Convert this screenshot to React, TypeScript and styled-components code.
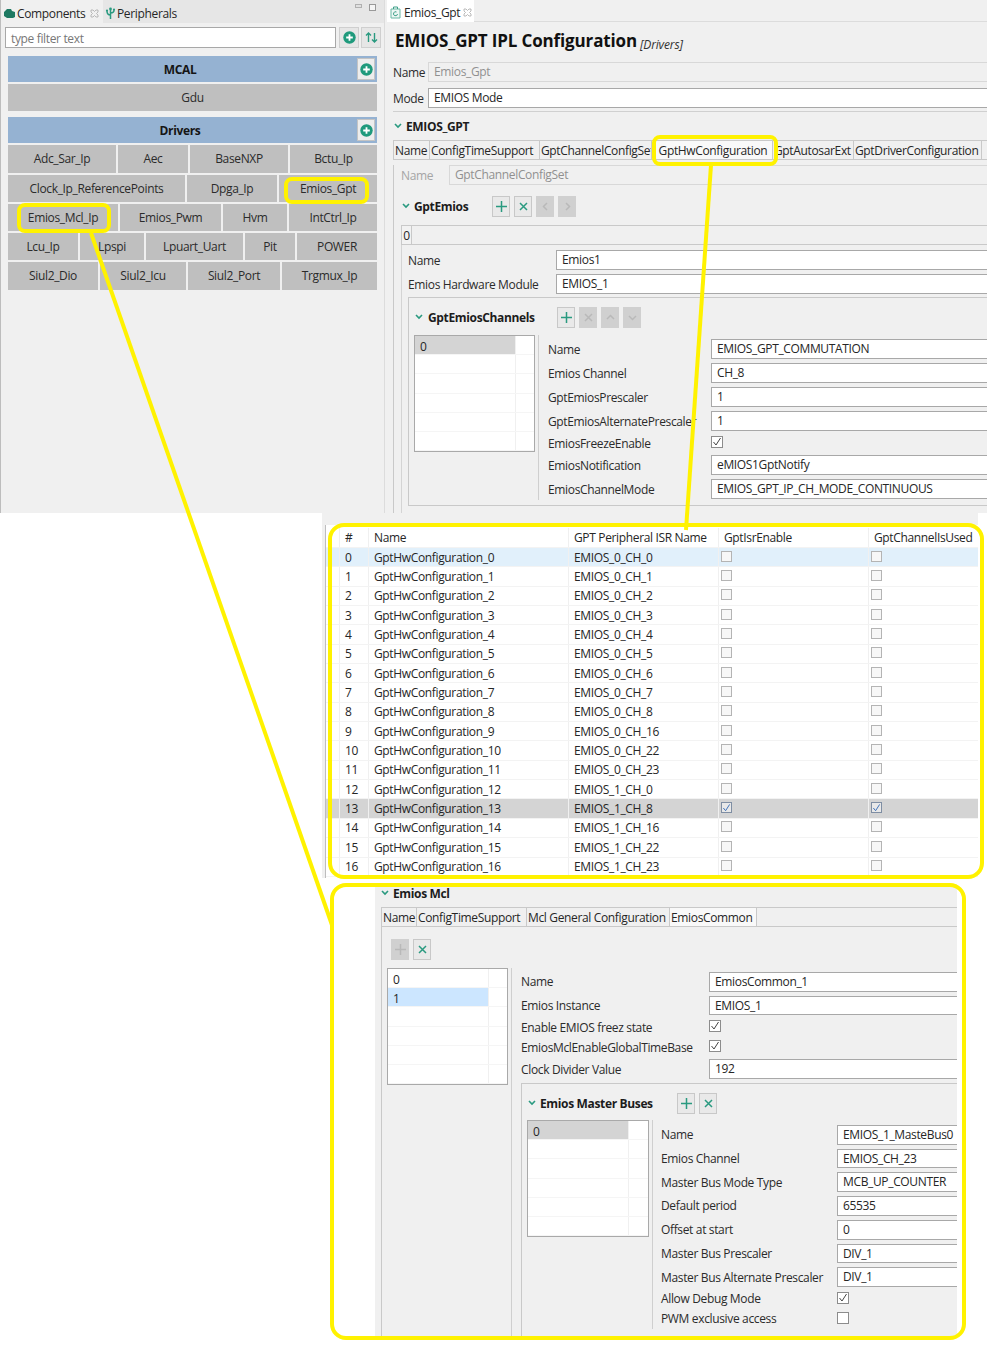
import React from "react";
import styled, { createGlobalStyle } from "styled-components";

const GlobalStyle = createGlobalStyle`
  html, body {
    margin: 0;
    padding: 0;
    background: #fff;
  }
  body {
    font-family: "Open Sans", "Liberation Sans", sans-serif;
    font-size: 12px;
    letter-spacing: -0.35px;
    color: #262626;
  }
  * {
    box-sizing: border-box;
  }
`;

const TEAL = "#2a9a80";

/* ---------- icons ---------- */

const Chevron = () => (
  <svg width="8" height="6" viewBox="0 0 8 6">
    <path d="M1 1l3 3 3-3" fill="none" stroke={TEAL} strokeWidth="1.6" />
  </svg>
);

const PlusCircle = () => (
  <svg width="13" height="13" viewBox="0 0 13 13">
    <circle cx="6.5" cy="6.5" r="6.2" fill="#1f9a7c" />
    <path d="M6.5 3.2v6.6M3.2 6.5h6.6" stroke="#fff" strokeWidth="1.8" />
  </svg>
);

const SortArrows = () => (
  <svg width="13" height="13" viewBox="0 0 13 13">
    <path d="M3.5 11V2M1 4.5l2.5-2.5L6 4.5" fill="none" stroke={TEAL} strokeWidth="1.4" />
    <path d="M9.5 2v9M7 8.5L9.5 11 12 8.5" fill="none" stroke={TEAL} strokeWidth="1.4" />
  </svg>
);

const toolPaths: Record<string, string> = {
  plus: "M6.5 1v11M1 6.5h11",
  cross: "M3 3l7 7M10 3l-7 7",
  left: "M8 3L4.5 6.5 8 10",
  right: "M5 3l3.5 3.5L5 10",
  up: "M3 8l3.5-3.5L10 8",
  down: "M3 5l3.5 3.5L10 5",
};

const CloseMark = () => (
  <svg width="9" height="9" viewBox="0 0 9 9">
    <path d="M1 1l2 0 1.500 1.500L6 1l2 0 0 2L6.500 4.500 8 6v2L6 8 4.500 6.500 3 8 1 8 1 6l1.500-1.500L1 3z" fill="none" stroke="#a9a9a9" strokeWidth="0.8" />
  </svg>
);

const ComponentsIcon = () => (
  <svg width="13" height="11" viewBox="0 0 13 11">
    <path d="M1 4l3-3h4l1 2 3 1v5l-2 1H4L1 8z" fill="#1f7a63" />
  </svg>
);

const PeripheralsIcon = () => (
  <svg width="11" height="13" viewBox="0 0 11 13">
    <path d="M5.500 12V3M5.500 8C2.500 8 2 6.500 2 4M5.500 6C8.500 6 9 5 9 3" fill="none" stroke="#2a9a80" strokeWidth="1.5" />
    <circle cx="5.500" cy="2" r="1.400" fill="#2a9a80" />
    <circle cx="2" cy="3.500" r="1.100" fill="#2a9a80" />
    <circle cx="9" cy="2.500" r="1.100" fill="#2a9a80" />
  </svg>
);

const FileIcon = () => (
  <svg width="11" height="13" viewBox="0 0 11 13">
    <path d="M1 3h9v9H1z" fill="#eef7f4" stroke="#6bb8a5" />
    <path d="M3.500 3V1h4v2M7.500 8a2 2 0 1 1-1-2" fill="none" stroke="#3d9f88" />
  </svg>
);

/* ---------- shared parts ---------- */

const Page = styled.div`
  position: relative;
  width: 987px;
  height: 1345px;
  overflow: hidden;
  background: #fff;
`;

const Annotations = styled.svg`
  position: absolute;
  left: 0;
  top: 0;
  pointer-events: none;
`;

const Section = styled.div<{ $left?: number; $top?: number }>`
  display: flex;
  align-items: center;
  height: 20px;
  margin-left: ${(p) => p.$left ?? 0}px;
  margin-top: ${(p) => p.$top ?? 0}px;
`;

const SectionLabel = styled.div<{ $w?: number; $gap?: number }>`
  display: flex;
  align-items: center;
  gap: ${(p) => p.$gap ?? 4}px;
  width: ${(p) => (p.$w ? `${p.$w}px` : "auto")};
  font-weight: 700;
  color: #1c1c1c;
  white-space: nowrap;
`;

const Tools = styled.div<{ $left?: number }>`
  display: flex;
  gap: 4px;
  margin-left: ${(p) => p.$left ?? 0}px;
`;

const ToolBtn = styled.div<{ $off?: boolean }>`
  display: flex;
  align-items: center;
  justify-content: center;
  width: 18px;
  height: 21px;
  background: ${(p) => (p.$off ? "#d0d0d0" : "#e9e9e9")};
  border: 1px solid ${(p) => (p.$off ? "#d0d0d0" : "#c8c8c8")};
`;

const Tool = ({ kind, off }: { kind: string; off?: boolean }) => (
  <ToolBtn $off={off}>
    <svg width="13" height="13" viewBox="0 0 13 13">
      <path d={toolPaths[kind]} fill="none" stroke={off ? "#b9b9b9" : TEAL} strokeWidth="1.5" />
    </svg>
  </ToolBtn>
);

const TabRow = styled.div<{ $left?: number; $top?: number }>`
  display: flex;
  height: 20px;
  margin-left: ${(p) => p.$left ?? 0}px;
  margin-top: ${(p) => p.$top ?? 0}px;
  border-top: 1px solid #c9c9c9;
  border-bottom: 1px solid #c9c9c9;
  border-left: 1px solid #c9c9c9;
`;

const Tab = styled.div<{ $w: number; $on?: boolean }>`
  flex: 0 0 ${(p) => p.$w}px;
  overflow: hidden;
  padding-left: 1px;
  line-height: 19px;
  white-space: nowrap;
  background: ${(p) => (p.$on ? "#f9f9f9" : "#f0f0f0")};
  border-right: 1px solid #c9c9c9;
`;

const Row = styled.div<{ $top?: number }>`
  display: flex;
  align-items: center;
  height: 20px;
  margin-top: ${(p) => p.$top ?? 0}px;
`;

const Label = styled.div<{ $w: number; $muted?: boolean }>`
  flex: 0 0 ${(p) => p.$w}px;
  white-space: nowrap;
  color: ${(p) => (p.$muted ? "#a5a5a5" : "#2b2b2b")};
`;

const Input = styled.div<{ $off?: boolean }>`
  flex: 1;
  height: 100%;
  margin-right: -6px;
  padding-left: 5px;
  line-height: 18px;
  white-space: nowrap;
  background: ${(p) => (p.$off ? "#f0f0f0" : "#fff")};
  color: ${(p) => (p.$off ? "#909090" : "#262626")};
  border: 1px solid ${(p) => (p.$off ? "#d8d8d8" : "#a8a8a8")};
`;

const Form = styled.div<{ $pitch?: number; $top?: number }>`
  --pitch: ${(p) => p.$pitch ?? 24}px;
  flex: 1;
  min-width: 0;
  padding-top: ${(p) => p.$top ?? 2}px;
`;

const Field = styled.div`
  display: flex;
  align-items: center;
  height: var(--pitch);
  padding: 2px 0;
`;

const CheckField = styled.div`
  display: flex;
  align-items: center;
  height: 20px;
`;

const CheckBox = styled.div<{ $tone?: "form" | "cell" | "blue" }>`
  display: flex;
  align-items: center;
  justify-content: center;
  width: ${(p) => (p.$tone === "form" ? 12 : 11)}px;
  height: ${(p) => (p.$tone === "form" ? 12 : 11)}px;
  margin-bottom: 2px;
  background: ${(p) => (p.$tone === "form" ? "#fff" : p.$tone === "blue" ? "#e8e8e8" : "#f7f7f7")};
  border: 1px solid ${(p) => (p.$tone === "form" ? "#8c8c8c" : p.$tone === "blue" ? "#7f8ea3" : "#b4b4b4")};
`;

const Check = ({ tone, on }: { tone?: "form" | "cell" | "blue"; on?: boolean }) => (
  <CheckBox $tone={tone}>
    {on && (
      <svg width="10" height="10" viewBox="0 0 10 10">
        <path d="M1.500 5l2.500 3 4.500-7" fill="none" stroke={tone === "blue" ? "#2f66b5" : "#444"} strokeWidth="1" />
      </svg>
    )}
  </CheckBox>
);

const ListBox = styled.div<{ $w: number }>`
  flex: 0 0 ${(p) => p.$w}px;
  height: 117px;
  background: #fff;
  border: 1px solid #a9a9a9;
  align-self: flex-start;
`;

const ListRow = styled.div`
  display: flex;
  height: 19.2px;
  border-bottom: 1px solid #f5f5f5;
`;

const ListCell = styled.div<{ $tone?: "grey" | "blue" }>`
  flex: 0 0 101px;
  padding-left: 5px;
  line-height: 21px;
  background: ${(p) => (p.$tone === "grey" ? "#d4d4d4" : p.$tone === "blue" ? "#cce6ff" : "transparent")};
  border-right: 1px solid #f0f0f0;
`;

const ItemList = ({ w, items, tones }: { w: number; items: string[]; tones: Record<number, "grey" | "blue"> }) => (
  <ListBox $w={w}>
    {[0, 1, 2, 3, 4, 5].map((i) => (
      <ListRow key={i}>
        <ListCell $tone={tones[i]}>{items[i]}</ListCell>
      </ListRow>
    ))}
  </ListBox>
);

const Split = styled.div<{ $top: number }>`
  display: flex;
  margin-top: ${(p) => p.$top}px;
`;

const Divider = styled.div<{ $h?: number; $after: number }>`
  flex: 0 0 1px;
  height: ${(p) => (p.$h ? `${p.$h}px` : "auto")};
  margin: 0 ${(p) => p.$after}px 0 3px;
  background: #cfcfcf;
`;

/* ---------- left pane ---------- */

const Top = styled.div`
  display: flex;
  height: 513px;
  background: #f0f0f0;
`;

const LeftPane = styled.div`
  flex: 0 0 385px;
  border-left: 1px solid #bdbdbd;
  border-right: 1px solid #dcdcdc;
`;

const ViewStrip = styled.div`
  display: flex;
  align-items: center;
  height: 23px;
  background: #e6e6e6;
`;

const ViewTab = styled.div<{ $on?: boolean; $w: number }>`
  display: flex;
  align-items: center;
  gap: 1px;
  flex: 0 0 ${(p) => p.$w}px;
  height: 100%;
  padding: 3px 0 0 2px;
  background: ${(p) => (p.$on ? "#f0f0f0" : "transparent")};
`;

const TabText = styled.span`
  margin-right: 4px;
`;

const WindowBtns = styled.div`
  display: flex;
  gap: 7px;
  margin-left: auto;
  margin-right: 8px;
  margin-bottom: 8px;
`;

const MinBtn = styled.div`
  width: 7px;
  height: 4px;
  border: 1px solid #b0b0b0;
  background: #e0e0e0;
`;

const MaxBtn = styled.div`
  width: 7px;
  height: 7px;
  border: 1px solid #999;
  background: #f5f5f5;
`;

const FilterRow = styled.div`
  display: flex;
  align-items: center;
  height: 21px;
  margin: 4px 0 0 4px;
`;

const FilterInput = styled.div`
  flex: 0 0 331px;
  height: 100%;
  padding-left: 5px;
  line-height: 21px;
  color: #777;
  background: #fff;
  border: 1px solid #a8a8a8;
`;

const FilterBtn = styled.div<{ $left: number }>`
  display: flex;
  align-items: center;
  justify-content: center;
  flex: 0 0 20px;
  height: 100%;
  margin-left: ${(p) => p.$left}px;
  background: #e6e6e6;
  border: 1px solid #cfcfcf;
`;

const Tiles = styled.div`
  display: flex;
  flex-direction: column;
  gap: 2px;
  width: 369px;
  margin: 8px 0 0 7px;
`;

const BlueBar = styled.div<{ $top?: number }>`
  display: flex;
  align-items: center;
  height: 26px;
  margin-top: ${(p) => p.$top ?? 0}px;
  padding-right: 2px;
  background: #95b2d2;
`;

const BarTitle = styled.div`
  flex: 1;
  padding-right: 5px;
  padding-top: 1px;
  text-align: center;
  font-weight: 700;
  color: #151515;
`;

const BarBtn = styled.div`
  display: flex;
  align-items: center;
  justify-content: center;
  width: 18px;
  height: 22px;
  background: #ededed;
  border: 1px solid #c4c4c4;
`;

const TileRow = styled.div`
  display: flex;
  gap: 2px;
`;

const Tile = styled.div<{ $grow: number }>`
  flex: ${(p) => p.$grow} 0 0;
  height: 27.25px;
  line-height: 28px;
  text-align: center;
  white-space: nowrap;
  color: #2b2b2b;
  background: #bfbfbf;
`;

const tileRows: [string, number][][] = [
  [["Adc_Sar_Ip", 108], ["Aec", 70], ["BaseNXP", 98], ["Bctu_Ip", 87]],
  [["Clock_Ip_ReferencePoints", 177], ["Dpga_Ip", 90], ["Emios_Gpt", 98]],
  [["Emios_Mcl_Ip", 110], ["Emios_Pwm", 101], ["Hvm", 64], ["IntCtrl_Ip", 88]],
  [["Lcu_Ip", 70], ["Lpspi", 64], ["Lpuart_Uart", 97], ["Pit", 50], ["POWER", 80]],
  [["Siul2_Dio", 90], ["Siul2_Icu", 86], ["Siul2_Port", 92], ["Trgmux_Ip", 95]],
];

/* ---------- right pane ---------- */

const RightPane = styled.div`
  flex: 1;
  min-width: 0;
  margin-left: 2px;
  overflow: hidden;
  padding-left: 6px;
`;

const EditorStrip = styled.div`
  height: 22px;
  margin-left: -6px;
  border-bottom: 1px solid #dcdcdc;
`;

const EditorTab = styled.div`
  display: flex;
  align-items: center;
  gap: 3px;
  width: 87px;
  height: 22px;
  padding: 2px 0 0 3px;
  background: #fff;
`;

const Title = styled.div`
  margin: 8px 0 0 2px;
  height: 22px;
  line-height: 22px;
  font-size: 17px;
  font-weight: 700;
  letter-spacing: -0.15px;
  color: #111;
  white-space: nowrap;
`;

const TitleNote = styled.span`
  margin-left: 3px;
  font-size: 12px;
  font-weight: 400;
  font-style: italic;
  vertical-align: -2px;
  color: #333;
`;

const Rule = styled.div`
  height: 1px;
  margin-top: 3px;
  background: #d0d0d0;
`;

const TabBody = styled.div`
  height: 353px;
  padding-left: 7px;
  border-left: 1px solid #c9c9c9;
`;

const InnerTabs = styled.div`
  display: flex;
  height: 20px;
  margin: 9px 0 0 0;
  border-bottom: 1px solid #c9c9c9;
`;

const InnerTab = styled.div`
  width: 11px;
  line-height: 19px;
  text-align: center;
  border: 1px solid #c9c9c9;
  border-bottom: none;
  background: #f2f2f2;
`;

const InnerStrip = styled.div`
  flex: 1;
  border-top: 1px solid #c9c9c9;
`;

const InnerBody = styled.div`
  height: 270px;
  padding: 5px 0 0 6px;
  border-left: 1px solid #d4d4d4;
`;

const GroupBox = styled.div<{ $top: number; $h: number; $left?: number }>`
  height: ${(p) => p.$h}px;
  margin-top: ${(p) => p.$top}px;
  margin-left: ${(p) => p.$left ?? 0}px;
  padding: 8.5px 0 0 5px;
  border: 1px solid #c9c9c9;
  border-right: none;
`;

const GroupHead = styled.div`
  display: flex;
  align-items: center;
  height: 21px;
  padding-left: 1px;
`;

/* ---------- config table ---------- */

const TablePanel = styled.div`
  width: 656px;
  height: 365px;
  margin-left: 322px;
  padding: 12px 0 0 3px;
  background: #f0f0f0;
`;

const Table = styled.div`
  height: 353px;
  overflow: hidden;
  background: #fff;
  border-left: 1px solid #bdbdbd;
`;

const TRow = styled.div<{ $tone?: "head" | "hover" | "sel" }>`
  display: grid;
  grid-template-columns: 13px 29px 200px 150px 150px 1fr;
  height: ${(p) => (p.$tone === "head" ? 23 : 19.35)}px;
  padding-top: ${(p) => (p.$tone === "head" ? 3 : 0)}px;
  background: ${(p) => (p.$tone === "hover" ? "#e1f0fb" : p.$tone === "sel" ? "#d4d4d4" : "#fff")};
  border-bottom: 1px solid #f3f3f3;
`;

const TCell = styled.div<{ $check?: boolean }>`
  display: flex;
  align-items: center;
  padding-left: ${(p) => (p.$check ? 2 : 5)}px;
  border-left: 1px solid #f0f0f0;
  white-space: nowrap;
  overflow: hidden;
`;

const Gutter = styled.div``;

const isrNames = [
  "EMIOS_0_CH_0", "EMIOS_0_CH_1", "EMIOS_0_CH_2", "EMIOS_0_CH_3", "EMIOS_0_CH_4", "EMIOS_0_CH_5",
  "EMIOS_0_CH_6", "EMIOS_0_CH_7", "EMIOS_0_CH_8", "EMIOS_0_CH_16", "EMIOS_0_CH_22", "EMIOS_0_CH_23",
  "EMIOS_1_CH_0", "EMIOS_1_CH_8", "EMIOS_1_CH_16", "EMIOS_1_CH_22", "EMIOS_1_CH_23",
];

/* ---------- Emios Mcl panel ---------- */

const McuPanel = styled.div`
  width: 582px;
  height: 452px;
  margin: 6px 0 0 375px;
  overflow: hidden;
  background: #f0f0f0;
`;

const McuBody = styled.div`
  height: 410px;
  margin-left: 6px;
  padding: 12px 0 0 5px;
  border-left: 1px solid #c9c9c9;
`;

const McuColumns = styled.div`
  display: flex;
  height: 368px;
  margin-top: 8px;
`;

const McuRight = styled.div`
  flex: 1;
  min-width: 0;
`;

export default function App() {
  return (
    <Page>
      <GlobalStyle />
      <Top>
        <LeftPane>
          <ViewStrip>
            <ViewTab $on $w={102}>
              <ComponentsIcon />
              <TabText>Components</TabText>
              <CloseMark />
            </ViewTab>
            <ViewTab $w={90}>
              <PeripheralsIcon />
              <TabText>Peripherals</TabText>
            </ViewTab>
            <WindowBtns>
              <MinBtn />
              <MaxBtn />
            </WindowBtns>
          </ViewStrip>
          <FilterRow>
            <FilterInput>type filter text</FilterInput>
            <FilterBtn $left={3}>
              <PlusCircle />
            </FilterBtn>
            <FilterBtn $left={2}>
              <SortArrows />
            </FilterBtn>
          </FilterRow>
          <Tiles>
            <BlueBar>
              <BarTitle>MCAL</BarTitle>
              <BarBtn>
                <PlusCircle />
              </BarBtn>
            </BlueBar>
            <TileRow>
              <Tile $grow={1}>Gdu</Tile>
            </TileRow>
            <BlueBar $top={4}>
              <BarTitle>Drivers</BarTitle>
              <BarBtn>
                <PlusCircle />
              </BarBtn>
            </BlueBar>
            {tileRows.map((row, i) => (
              <TileRow key={i}>
                {row.map(([name, grow]) => (
                  <Tile key={name} $grow={grow}>
                    {name}
                  </Tile>
                ))}
              </TileRow>
            ))}
          </Tiles>
        </LeftPane>

        <RightPane>
          <EditorStrip>
            <EditorTab>
              <FileIcon />
              <span>Emios_Gpt</span>
              <CloseMark />
            </EditorTab>
          </EditorStrip>
          <Title>
            EMIOS_GPT IPL Configuration<TitleNote>[Drivers]</TitleNote>
          </Title>
          <Row $top={10}>
            <Label $w={35}>Name</Label>
            <Input $off>Emios_Gpt</Input>
          </Row>
          <Row $top={6}>
            <Label $w={35}>Mode</Label>
            <Input>EMIOS Mode</Input>
          </Row>
          <Rule />
          <Section $left={1} $top={4}>
            <SectionLabel>
              <Chevron />
              EMIOS_GPT
            </SectionLabel>
          </Section>
          <TabRow $top={4}>
            <Tab $w={36}>Name</Tab>
            <Tab $w={110}>ConfigTimeSupport</Tab>
            <Tab $w={112}>GptChannelConfigSet</Tab>
            <Tab $w={121} $on>
              &nbsp;&nbsp;GptHwConfiguration
            </Tab>
            <Tab $w={81}>GptAutosarExt</Tab>
            <Tab $w={128}>GptDriverConfiguration</Tab>
          </TabRow>
          <TabBody>
            <Row $top={5}>
              <Label $w={48} $muted>
                Name
              </Label>
              <Input $off>GptChannelConfigSet</Input>
            </Row>
            <Section $left={1} $top={11}>
              <SectionLabel $w={90}>
                <Chevron />
                GptEmios
              </SectionLabel>
              <Tools>
                <Tool kind="plus" />
                <Tool kind="cross" />
                <Tool kind="left" off />
                <Tool kind="right" off />
              </Tools>
            </Section>
            <InnerTabs>
              <InnerTab>0</InnerTab>
              <InnerStrip />
            </InnerTabs>
            <InnerBody>
              <Row>
                <Label $w={148}>Name</Label>
                <Input>Emios1</Input>
              </Row>
              <Row $top={4}>
                <Label $w={148}>Emios Hardware Module</Label>
                <Input>EMIOS_1</Input>
              </Row>
              <GroupBox $top={3} $h={209}>
                <GroupHead>
                  <SectionLabel $w={142} $gap={5}>
                    <Chevron />
                    GptEmiosChannels
                  </SectionLabel>
                  <Tools>
                    <Tool kind="plus" />
                    <Tool kind="cross" off />
                    <Tool kind="up" off />
                    <Tool kind="down" off />
                  </Tools>
                </GroupHead>
                <Split $top={7.5}>
                  <ItemList w={121} items={["0"]} tones={{ 0: "grey" }} />
                  <Divider $after={9} $h={165} />
                  <Form>
                    <Field>
                      <Label $w={163}>Name</Label>
                      <Input>EMIOS_GPT_COMMUTATION</Input>
                    </Field>
                    <Field>
                      <Label $w={163}>Emios Channel</Label>
                      <Input>CH_8</Input>
                    </Field>
                    <Field>
                      <Label $w={163}>GptEmiosPrescaler</Label>
                      <Input>1</Input>
                    </Field>
                    <Field>
                      <Label $w={163}>GptEmiosAlternatePrescaler</Label>
                      <Input>1</Input>
                    </Field>
                    <CheckField>
                      <Label $w={163}>EmiosFreezeEnable</Label>
                      <Check tone="form" on />
                    </CheckField>
                    <Field>
                      <Label $w={163}>EmiosNotification</Label>
                      <Input>eMIOS1GptNotify</Input>
                    </Field>
                    <Field>
                      <Label $w={163}>EmiosChannelMode</Label>
                      <Input>EMIOS_GPT_IP_CH_MODE_CONTINUOUS</Input>
                    </Field>
                  </Form>
                </Split>
              </GroupBox>
            </InnerBody>
          </TabBody>
        </RightPane>
      </Top>

      <TablePanel>
        <Table>
          <TRow $tone="head">
            <Gutter />
            <TCell>#</TCell>
            <TCell>Name</TCell>
            <TCell>GPT Peripheral ISR Name</TCell>
            <TCell>GptIsrEnable</TCell>
            <TCell>GptChannelIsUsed</TCell>
          </TRow>
          {isrNames.map((isr, i) => (
            <TRow key={isr} $tone={i === 0 ? "hover" : i === 13 ? "sel" : undefined}>
              <Gutter />
              <TCell>{i}</TCell>
              <TCell>GptHwConfiguration_{i}</TCell>
              <TCell>{isr}</TCell>
              <TCell $check>
                <Check tone={i === 13 ? "blue" : "cell"} on={i === 13} />
              </TCell>
              <TCell $check>
                <Check tone={i === 13 ? "blue" : "cell"} on={i === 13} />
              </TCell>
            </TRow>
          ))}
        </Table>
      </TablePanel>

      <McuPanel>
        <Section $left={6} $top={-1}>
          <SectionLabel>
            <Chevron />
            Emios Mcl
          </SectionLabel>
        </Section>
        <TabRow $left={6} $top={4}>
          <Tab $w={35}>Name</Tab>
          <Tab $w={110}>ConfigTimeSupport</Tab>
          <Tab $w={143}>Mcl General Configuration</Tab>
          <Tab $w={87} $on>
            EmiosCommon
          </Tab>
        </TabRow>
        <McuBody>
          <Tools $left={4}>
            <Tool kind="plus" off />
            <Tool kind="cross" />
          </Tools>
          <McuColumns>
            <ItemList w={121} items={["0", "1"]} tones={{ 1: "blue" }} />
            <Divider $after={9} />
            <McuRight>
              <Form $pitch={23.7}>
                <Field>
                  <Label $w={188}>Name</Label>
                  <Input>EmiosCommon_1</Input>
                </Field>
                <Field>
                  <Label $w={188}>Emios Instance</Label>
                  <Input>EMIOS_1</Input>
                </Field>
                <CheckField>
                  <Label $w={188}>Enable EMIOS freez state</Label>
                  <Check tone="form" on />
                </CheckField>
                <CheckField>
                  <Label $w={188}>EmiosMclEnableGlobalTimeBase</Label>
                  <Check tone="form" on />
                </CheckField>
                <Field>
                  <Label $w={188}>Clock Divider Value</Label>
                  <Input>192</Input>
                </Field>
              </Form>
              <GroupBox $top={2} $h={270}>
                <GroupHead>
                  <SectionLabel $w={149}>
                    <Chevron />
                    Emios Master Buses
                  </SectionLabel>
                  <Tools>
                    <Tool kind="plus" />
                    <Tool kind="cross" />
                  </Tools>
                </GroupHead>
                <Split $top={6.5}>
                  <ItemList w={122} items={["0"]} tones={{ 0: "grey" }} />
                  <Divider $after={8} />
                  <Form $pitch={23.7} $top={3}>
                    <Field>
                      <Label $w={176}>Name</Label>
                      <Input>EMIOS_1_MasteBus0</Input>
                    </Field>
                    <Field>
                      <Label $w={176}>Emios Channel</Label>
                      <Input>EMIOS_CH_23</Input>
                    </Field>
                    <Field>
                      <Label $w={176}>Master Bus Mode Type</Label>
                      <Input>MCB_UP_COUNTER</Input>
                    </Field>
                    <Field>
                      <Label $w={176}>Default period</Label>
                      <Input>65535</Input>
                    </Field>
                    <Field>
                      <Label $w={176}>Offset at start</Label>
                      <Input>0</Input>
                    </Field>
                    <Field>
                      <Label $w={176}>Master Bus Prescaler</Label>
                      <Input>DIV_1</Input>
                    </Field>
                    <Field>
                      <Label $w={176}>Master Bus Alternate Prescaler</Label>
                      <Input>DIV_1</Input>
                    </Field>
                    <CheckField>
                      <Label $w={176}>Allow Debug Mode</Label>
                      <Check tone="form" on />
                    </CheckField>
                    <CheckField>
                      <Label $w={176}>PWM exclusive access</Label>
                      <Check tone="form" />
                    </CheckField>
                  </Form>
                </Split>
              </GroupBox>
            </McuRight>
          </McuColumns>
        </McuBody>
      </McuPanel>

      <Annotations width="987" height="1345" viewBox="0 0 987 1345">
        <g fill="none" stroke="#fff200" strokeWidth="4">
          <rect x="286" y="179" width="81" height="23" rx="6" />
          <rect x="19" y="205" width="90" height="26" rx="6" />
          <rect x="654" y="137" width="122" height="27" rx="6" />
          <rect x="330" y="525" width="652" height="352" rx="14" />
          <rect x="332" y="885" width="632" height="453" rx="14" />
          <path d="M711 165L686 530" />
          <path d="M91 233L332 925" />
        </g>
      </Annotations>
    </Page>
  );
}
